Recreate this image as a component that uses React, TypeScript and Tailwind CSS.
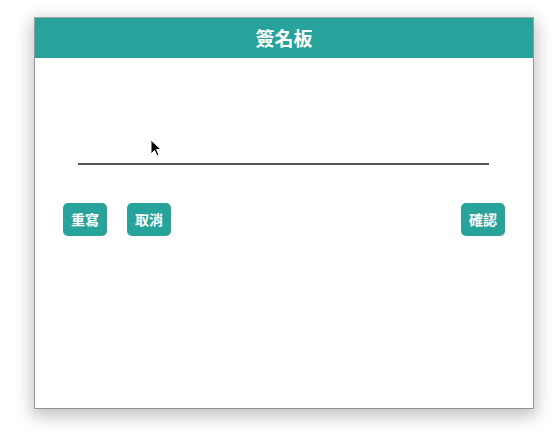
import React from "react";

function Cursor() {
  return (
    <svg
      className="absolute left-[150px] top-[139px]"
      width="12"
      height="19"
      viewBox="0 0 12 19"
    >
      <path
        d="M1 1 L1 15 L4.5 11.5 L7 17 L9 16 L6.5 10.5 L11 10.5 Z"
        fill="#000"
        stroke="#fff"
        strokeWidth="1"
        strokeLinejoin="round"
      />
    </svg>
  );
}

export default function App() {
  const font = { fontFamily: '"Noto Sans CJK TC", "Noto Sans", sans-serif' };
  return (
    <div className="relative w-full h-[443px] bg-white pt-[18px] pl-[35px]" style={font}>
      <div className="w-[498px] h-[390px] bg-white shadow-[0_0_0_1px_rgba(0,0,0,0.3),0_5px_16px_3px_rgba(0,0,0,0.25)] flex flex-col">
        <div className="h-[40px] bg-[#27a39b] flex items-center justify-center text-white text-[19px] font-bold">
          簽名板
        </div>
        <div className="pt-[105px] px-[44px] pl-[43px]">
          <div className="h-[2px] bg-[#555555]" />
        </div>
        <div className="mt-[38px] px-[28px] flex items-center">
          <button className="h-[33px] w-[44px] rounded-[5px] bg-[#27a39b] text-white text-[14px] font-bold flex items-center justify-center">
            重寫
          </button>
          <button className="ml-[20px] h-[33px] w-[44px] rounded-[5px] bg-[#27a39b] text-white text-[14px] font-bold flex items-center justify-center">
            取消
          </button>
          <div className="flex-1" />
          <button className="h-[33px] w-[44px] rounded-[5px] bg-[#27a39b] text-white text-[14px] font-bold flex items-center justify-center">
            確認
          </button>
        </div>
      </div>
      <Cursor />
    </div>
  );
}
